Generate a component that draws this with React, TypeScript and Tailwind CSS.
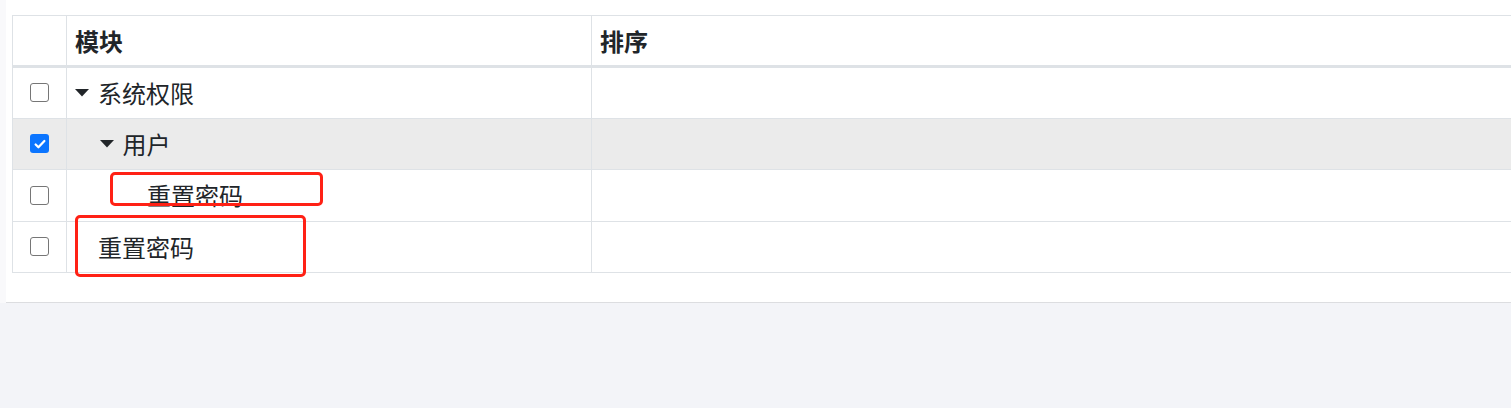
import React from "react";

type Row = {
  label: string;
  indent: number;
  caret?: boolean;
  checked?: boolean;
};

const rows: Row[] = [
  { label: "系统权限", indent: 0, caret: true },
  { label: "用户", indent: 1, caret: true, checked: true },
  { label: "重置密码", indent: 2 },
  { label: "重置密码", indent: 0 },
];

function Checkbox({ checked }: { checked?: boolean }) {
  if (checked) {
    return (
      <span className="flex h-[19px] w-[19px] items-center justify-center rounded-[3px] bg-[#0b75ff]">
        <svg viewBox="0 0 16 16" className="h-[14px] w-[14px]" fill="none">
          <path d="M3 8.5l3.2 3.2L13 4.6" stroke="white" strokeWidth="2.6" strokeLinecap="round" strokeLinejoin="round" />
        </svg>
      </span>
    );
  }
  return <span className="block h-[19px] w-[19px] rounded-[3px] border-[1.5px] border-[#767676] bg-white" />;
}

function Caret() {
  return (
    <svg viewBox="0 0 14 8" className="mr-[9px] h-[8px] w-[14px] shrink-0">
      <path d="M0 0h14L7 7.5z" fill="#212529" />
    </svg>
  );
}

export default function App() {
  return (
    <div className="min-h-[408px] bg-[#f3f4f8] font-['Noto_Sans_CJK_SC','Noto_Sans',sans-serif] text-[#212529]">
      <div className="flex">
        <div className="w-[6px] shrink-0 bg-[#f9f9fb]" />
        <div className="flex-1 overflow-hidden border-b border-[#dcdde0] bg-white pb-[29px] pl-[6px] pt-[15px]">
          <div className="relative">
            <table className="w-[1520px] table-fixed border-collapse">
              <colgroup>
                <col className="w-[54px]" />
                <col className="w-[525px]" />
                <col />
              </colgroup>
              <thead>
                <tr className="h-[51px] border-t border-[#dee2e6]">
                  <th className="border-x border-b-[3px] border-[#dee2e6]" />
                  <th className="border-x border-b-[3px] border-[#dee2e6] px-[8px] text-left text-[24px] font-bold">
                    模块
                  </th>
                  <th className="border-x border-b-[3px] border-[#dee2e6] px-[8px] text-left text-[24px] font-bold">
                    排序
                  </th>
                </tr>
              </thead>
              <tbody>
                {rows.map((r, i) => (
                  <tr key={i} className={r.checked ? "h-[51.5px] bg-[#ebebeb]" : "h-[51.5px]"}>
                    <td className="border border-[#dee2e6]">
                      <div className="flex justify-center">
                        <Checkbox checked={r.checked} />
                      </div>
                    </td>
                    <td className="border border-[#dee2e6] px-[8px] text-[24px]">
                      <div className="flex items-center" style={{ paddingLeft: r.indent * 24.5 }}>
                        {r.caret ? <Caret /> : <span className="w-[23px] shrink-0" />}
                        <span className="leading-none">{r.label}</span>
                      </div>
                    </td>
                    <td className="border border-[#dee2e6]" />
                  </tr>
                ))}
              </tbody>
            </table>
            <div className="absolute left-[98px] top-[157px] h-[34px] w-[213px] rounded-[5px] border-[3px] border-[#ff2115]" />
            <div className="absolute left-[63px] top-[200px] h-[62px] w-[231px] rounded-[5px] border-[3px] border-[#ff2115]" />
          </div>
        </div>
      </div>
    </div>
  );
}
